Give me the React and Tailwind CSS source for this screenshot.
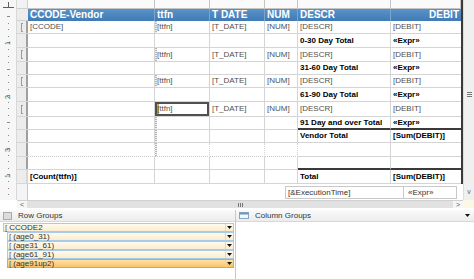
import React from "react";

const W = [127, 55, 55, 33, 93, 70];

const rows = [
  { h: 13, c: ["[CCODE]", "[ttfn]", "[T_DATE]", "[NUM]", "[DESCR]", "[DEBIT]"], br: true, strip: true },
  { h: 14, c: ["", "", "", "", "0-30 Day Total", "«Expr»"], bold: true },
  { h: 14, c: ["", "[ttfn]", "[T_DATE]", "[NUM]", "[DESCR]", "[DEBIT]"], br: true, strip: true },
  { h: 13, c: ["", "", "", "", "31-60 Day Total", "«Expr»"], bold: true },
  { h: 13, c: ["", "[ttfn]", "[T_DATE]", "[NUM]", "[DESCR]", "[DEBIT]"], br: true, strip: true },
  { h: 14, c: ["", "", "", "", "61-90 Day Total", "«Expr»"], bold: true },
  { h: 15, c: ["", "[ttfn]", "[T_DATE]", "[NUM]", "[DESCR]", "[DEBIT]"], br: true, sel: true },
  { h: 13, c: ["", "", "", "", "91 Day and over Total", "«Expr»"], bold: true, thickAfter: true, strip: true },
  { h: 13, c: ["", "", "", "", "Vendor Total", "[Sum(DEBIT)]"], bold: true, strip: true },
  { h: 14, c: ["", "", "", "", "", ""], dotted: true, strip: true },
  { h: 13, c: ["", "", "", "", "", ""], thickAfter: true },
  { h: 14, c: ["[Count(ttfn)]", "", "", "", "Total", "[Sum(DEBIT)]"], bold: true, boldFirst: true, noBar: true },
];

function Ruler() {
  const ticks = [];
  for (let y = 4; y < 205; y += 6.6) ticks.push(y);
  return (
    <svg width="17" height="200" className="block">
      <rect x="0" y="0" width="17" height="200" fill="#f7f7f7" />
      <line x1="3" y1="7.5" x2="14" y2="7.5" stroke="#606060" />
      <line x1="8.5" y1="2" x2="8.5" y2="7" stroke="#606060" />
      {ticks.map((y, i) => (
        <line key={i} x1={i % 4 === 0 ? 7 : 8} y1={Math.round(y + 12) + 0.5} x2={i % 4 === 0 ? 10 : 9} y2={Math.round(y + 12) + 0.5} stroke="#8a8a8a" />
      ))}
      {[["1", 43], ["2", 97], ["3", 150], ["1", 176]].map(([t, y], i) => (
        <text key={i} x="8.5" y={y} fontSize="7" fill="#555" fontFamily="Liberation Sans" textAnchor="middle" transform={`rotate(-90 8.5 ${y})`} dominantBaseline="middle">{t}</text>
      ))}
      <line x1="16.5" y1="0" x2="16.5" y2="200" stroke="#d8d8d8" />
    </svg>
  );
}

function Handle({ h, br, noBar }) {
  return (
    <div className="w-[11px] shrink-0 bg-[#ececec] border-b border-[#d6d6d6] flex" style={{ height: h }}>
      <div className="w-[9px] flex items-center justify-center">
        {br && <div className="w-[2px] h-[9px] border border-r-0 border-[#9a9a9a]" />}
      </div>
      <div className={"w-[2px] " + (noBar ? "bg-[#d6d6d6]" : "bg-[#a0a0a0]")} />
    </div>
  );
}

function Row({ r }) {
  return (
    <div className="flex">
      <Handle h={r.h} br={r.br} noBar={r.noBar} />
      {r.c.map((t, i) => {
        const isBold = (r.bold && i >= 4) || (r.boldFirst && i === 0);
        const thick = r.thickAfter && i >= 4;
        return (
          <div
            key={i}
            className={
              "shrink-0 relative flex items-center pl-[2px] border-r border-[#d4d4d4] text-[8px] leading-none whitespace-nowrap overflow-hidden " +
              (thick ? "border-b-2 border-b-[#3a3a3a] " : r.dotted && i < 4 ? "border-b border-b-[#c8c8c8] border-dotted " : "border-b border-b-[#d4d4d4] ") +
              (isBold ? "font-bold text-black " : "text-[#505050] ") +
              (i === 5 ? "border-r-0 " : "")
            }
            style={{ width: W[i], height: r.h }}
          >
            {i === 1 && r.strip && (
              <div className="absolute left-0 top-0 bottom-0 w-[2px] bg-[repeating-linear-gradient(180deg,#b5b5b5_0px,#b5b5b5_1px,#eeeeee_1px,#eeeeee_2px)]" />
            )}
            {r.sel && i === 1 && (
              <div className="absolute inset-0 border-2 border-[#505050]">
                <div className="absolute left-0 top-0 bottom-0 w-[2px] bg-[#e3a136]" />
              </div>
            )}
            <span className="relative">{t}</span>
          </div>
        );
      })}
    </div>
  );
}

function Table() {
  return (
    <div className="flex flex-col">
      <div className="flex h-[9px]">
        <div className="w-[11px] bg-[#f2f2f2] border-b border-r border-[#d0d0d0]" />
        {W.map((w, i) => (
          <div key={i} className="h-[9px] bg-[#fafafa] border-r border-b border-[#c4c4c4]" style={{ width: w }} />
        ))}
      </div>
      <div className="flex h-[12px]">
        <div className="w-[11px] bg-[#ececec] border-b border-[#d0d0d0]" />
        {["CCODE-Vendor", "ttfn", "T DATE", "NUM", "DESCR", "DEBIT"].map((t, i) => (
          <div
            key={i}
            className={
              "h-[12px] flex items-center bg-gradient-to-b from-[#5a92c8] to-[#3f7bb6] border-r border-[#7aa5cf] text-white font-bold text-[10px] leading-none whitespace-nowrap " +
              (i === 5 ? "justify-end pr-[2px] border-r-0" : "pl-[2px]")
            }
            style={{ width: W[i] }}
          >
            {t}
          </div>
        ))}
      </div>
      {rows.map((r, i) => (
        <Row key={i} r={r} />
      ))}
    </div>
  );
}

function Arrow() {
  return (
    <svg width="5" height="3" viewBox="0 0 5 3" className="block">
      <path d="M0 0h5L2.5 3z" fill="#111" />
    </svg>
  );
}

function GroupItem({ label, indent, sel }) {
  return (
    <div className={"flex h-[9px] " + (indent ? "ml-[7px]" : "ml-[3px]")}>
      <div
        className={
          "flex-1 flex items-center border text-[8px] leading-none pl-[1px] " +
          (sel
            ? "bg-gradient-to-b from-[#fde3a8] to-[#f7c266] border-[#e1a544] text-[#333]"
            : "bg-gradient-to-b from-[#fffaf0] to-[#fbeccb] border-[#a9cbe8] text-[#333]")
        }
      >
        <span className="text-[#555] mr-[2px]">[</span>
        {label}
        <div className="ml-auto w-[8px] h-full flex items-center justify-center border-l border-[#c9d9ea]">
          <Arrow />
        </div>
      </div>
    </div>
  );
}

export default function App() {
  return (
    <div className="w-[474px] h-[279px] overflow-hidden bg-white flex flex-col font-['Liberation_Sans',Arial,sans-serif]">
      <div className="flex h-[200px]">
        <Ruler />
        <div className="flex flex-col w-[446px]">
          <div className="flex">
            <Table />
            <div className="w-[2px] h-[184px] bg-[#3a3a3a]" />
          </div>
          <div className="flex flex-1">
            <div className="w-[11px] bg-[#f4f4f4] border-r border-[#c8c8c8]" />
            <div className="flex-1 flex items-start pt-[2px] pl-[257px]">
              <div className="flex h-[13px] border border-[#c8c8c8] text-[8px] leading-none text-[#333]">
                <div className="w-[118px] flex items-center pl-[2px] border-r border-[#c8c8c8]">[&amp;ExecutionTime]</div>
                <div className="w-[52px] flex items-center pl-[4px]">«Expr»</div>
              </div>
            </div>
          </div>
        </div>
        <div className="w-[11px] bg-[#f0f0f0] border-l border-[#dcdcdc] flex flex-col items-center">
          <div className="flex-1 flex items-center justify-center">
            <div className="flex flex-col gap-[1px]">
              <div className="w-[5px] h-px bg-[#777]" />
              <div className="w-[5px] h-px bg-[#777]" />
              <div className="w-[5px] h-px bg-[#777]" />
            </div>
          </div>
          <div className="h-[12px] text-[7px] text-[#666] leading-none">v</div>
        </div>
      </div>
      <div className="flex h-[8px]">
        <div className="w-[17px] bg-white" />
        <div className="flex-1 flex bg-[#e1e1e1] border-t border-[#d0d0d0]">
          <div className="w-[10px] bg-[#f6f6f6] flex items-center justify-center text-[7px] leading-none text-[#555]">&lt;</div>
          <div className="flex-1 flex items-center justify-center">
            <div className="flex gap-[1px]">
              <div className="w-px h-[4px] bg-[#777]" />
              <div className="w-px h-[4px] bg-[#777]" />
              <div className="w-px h-[4px] bg-[#777]" />
            </div>
          </div>
          <div className="w-[10px] bg-[#f6f6f6] flex items-center justify-center text-[7px] leading-none text-[#555]">&gt;</div>
        </div>
        <div className="w-[11px] bg-[#fbf9e6]" />
      </div>
      <div className="flex flex-1 pt-[2px]">
        <div className="w-[235px] flex flex-col">
          <div className="h-[12px] flex items-center gap-[4px] pl-[3px] bg-gradient-to-b from-[#fafafa] to-[#ececec] border-b border-[#d8d8d8] text-[8px] leading-none text-[#333]">
            <div className="w-[9px] h-[8px] bg-[#dcdcdc] border border-[#aaa]" />
            <span className="ml-[2px]">Row Groups</span>
          </div>
          <div className="flex flex-col pt-[1px] pr-[1px]">
            <GroupItem label="CCODE2" />
            <GroupItem label="(age0_31)" indent />
            <GroupItem label="(age31_61)" indent />
            <GroupItem label="(age61_91)" indent />
            <GroupItem label="(age91up2)" indent sel />
          </div>
        </div>
        <div className="flex-1 flex flex-col border-l border-[#c8c8c8]">
          <div className="h-[12px] flex items-center pl-[3px] pr-[4px] bg-gradient-to-b from-[#fafafa] to-[#ececec] border-b border-[#d8d8d8] text-[8px] leading-none text-[#333]">
            <svg width="10" height="7" className="block mr-[6px]">
              <rect x="0.5" y="0.5" width="9" height="6" fill="#f4f7fb" stroke="#8aa6c4" />
              <rect x="0.5" y="0.5" width="9" height="2" fill="#6f97c4" />
            </svg>
            <span>Column Groups</span>
            <div className="ml-auto"><Arrow /></div>
          </div>
          <div className="flex-1 bg-white" />
        </div>
      </div>
    </div>
  );
}
